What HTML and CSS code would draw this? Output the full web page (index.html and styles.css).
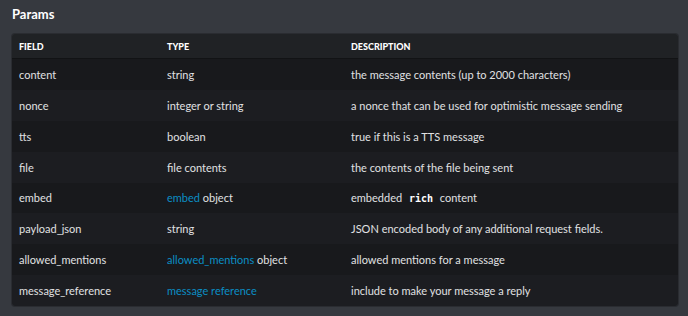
FILE: index.html
```html
<!DOCTYPE html>
<html lang="en">
<head>
    <meta charset="UTF-8">
    <title>Params</title>
    <link rel="stylesheet" href="styles.css">
</head>
<body>

<div class="page">
    <h3 class="section-title">Params</h3>

    <table class="params">
        <thead>
            <tr>
                <th class="col-field">Field</th>
                <th class="col-type">Type</th>
                <th>Description</th>
            </tr>
        </thead>
        <tbody>
            <tr>
                <td>content</td>
                <td>string</td>
                <td>the message contents (up to 2000 characters)</td>
            </tr>
            <tr>
                <td>nonce</td>
                <td>integer or string</td>
                <td>a nonce that can be used for optimistic message sending</td>
            </tr>
            <tr>
                <td>tts</td>
                <td>boolean</td>
                <td>true if this is a TTS message</td>
            </tr>
            <tr>
                <td>file</td>
                <td>file contents</td>
                <td>the contents of the file being sent</td>
            </tr>
            <tr>
                <td>embed</td>
                <td><a href="#">embed</a> object</td>
                <td>embedded <code>rich</code> content</td>
            </tr>
            <tr>
                <td>payload_json</td>
                <td>string</td>
                <td>JSON encoded body of any additional request fields.</td>
            </tr>
            <tr>
                <td>allowed_mentions</td>
                <td><a href="#">allowed_mentions</a> object</td>
                <td>allowed mentions for a message</td>
            </tr>
            <tr>
                <td>message_reference</td>
                <td><a href="#">message reference</a></td>
                <td>include to make your message a reply</td>
            </tr>
        </tbody>
    </table>
</div>

</body>
</html>
```

FILE: styles.css
```css
html, body {
    margin: 0;
    height: 100%;
}
body {
    font-family: 'Lato', 'Open Sans', sans-serif;
    color: #e0e1e3;
    background-color: #36393f;
}
.page {
    padding: 6px 10px 0 12px;
}
.section-title {
    margin: 0 0 12px;
    font-size: 13px;
    font-weight: 700;
    color: #ffffff;
    line-height: 16px;
}
.params {
    width: 666px;
    border-collapse: separate;
    border-spacing: 0;
    border-radius: 3px;
    overflow: hidden;
    box-shadow: 0 0 0 1px #2a2c31;
    font-size: 11px;
}
.params th {
    text-align: left;
    font-size: 9px;
    font-weight: 900;
    text-transform: uppercase;
    color: #ffffff;
    background-color: #202225;
    height: 24px;
    padding: 0 0 0 7px;
    border-bottom: 1px solid #121315;
}
.params td {
    height: 30.875px;
    padding: 0 0 0 7px;
    background-color: #18191c;
}
.params tbody tr:nth-child(even) td {
    background-color: #1c1d21;
}
.col-field {
    width: 141px;
}
.col-type {
    width: 177px;
}
.params a {
    color: #0b8ec4;
    text-decoration: none;
}
.params code {
    font-family: 'DejaVu Sans Mono', monospace;
    font-weight: 700;
    font-size: 10px;
    color: #ffffff;
    padding: 0 4px;
}
```
